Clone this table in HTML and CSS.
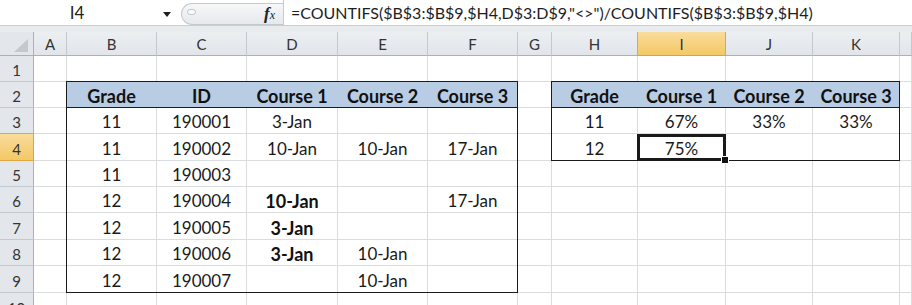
FILE: index.html
```html
<!DOCTYPE html>
<html>
<head>
<meta charset="utf-8">
<title>Sheet</title>
<link rel="stylesheet" href="styles.css">
</head>
<body>
<div class="app">
  <div class="fbar">
    <div class="namebox">I4</div>
    <div class="nb-arrow"><svg width="8" height="5" viewBox="0 0 8 5"><polygon points="0,0 8,0 4,5" fill="#1e1e1e"/></svg></div>
    <div class="tools">
      <div class="pill"><span class="knob"></span><span class="fx"><i class="f">f</i><i class="x">x</i></span></div>
    </div>
    <div class="formula">=COUNTIFS($B$3:$B$9,$H4,D$3:D$9,"&lt;&gt;")/COUNTIFS($B$3:$B$9,$H4)</div>
  </div>
  <div class="band"></div>
  <div class="stack">
  <div class="sheet">
    <div class="corner"><svg width="14" height="13" viewBox="0 0 14 13"><polygon points="0,13 14,13 14,0" fill="#c4c9cf"/></svg></div>
    <div class="h">A</div><div class="h">B</div><div class="h">C</div><div class="h">D</div><div class="h">E</div><div class="h">F</div><div class="h">G</div><div class="h">H</div><div class="h hs">I</div><div class="h">J</div><div class="h">K</div><div class="h"></div>

    <div class="rh">1</div>
    <div class="c"></div><div class="c"></div><div class="c"></div><div class="c"></div><div class="c"></div><div class="c"></div><div class="c"></div><div class="c"></div><div class="c"></div><div class="c"></div><div class="c"></div><div class="c"></div>

    <div class="rh">2</div>
    <div class="c"></div><div class="c th">Grade</div><div class="c th">ID</div><div class="c th">Course 1</div><div class="c th">Course 2</div><div class="c th">Course 3</div><div class="c"></div><div class="c th">Grade</div><div class="c th">Course 1</div><div class="c th">Course 2</div><div class="c th">Course 3</div><div class="c"></div>

    <div class="rh">3</div>
    <div class="c"></div><div class="c">11</div><div class="c">190001</div><div class="c">3-Jan</div><div class="c"></div><div class="c"></div><div class="c"></div><div class="c">11</div><div class="c">67%</div><div class="c">33%</div><div class="c">33%</div><div class="c"></div>

    <div class="rh rs">4</div>
    <div class="c"></div><div class="c">11</div><div class="c">190002</div><div class="c">10-Jan</div><div class="c">10-Jan</div><div class="c">17-Jan</div><div class="c"></div><div class="c">12</div><div class="c">75%</div><div class="c"></div><div class="c"></div><div class="c"></div>

    <div class="rh">5</div>
    <div class="c"></div><div class="c">11</div><div class="c">190003</div><div class="c"></div><div class="c"></div><div class="c"></div><div class="c"></div><div class="c"></div><div class="c"></div><div class="c"></div><div class="c"></div><div class="c"></div>

    <div class="rh">6</div>
    <div class="c"></div><div class="c">12</div><div class="c">190004</div><div class="c b">10-Jan</div><div class="c"></div><div class="c">17-Jan</div><div class="c"></div><div class="c"></div><div class="c"></div><div class="c"></div><div class="c"></div><div class="c"></div>

    <div class="rh">7</div>
    <div class="c"></div><div class="c">12</div><div class="c">190005</div><div class="c b">3-Jan</div><div class="c"></div><div class="c"></div><div class="c"></div><div class="c"></div><div class="c"></div><div class="c"></div><div class="c"></div><div class="c"></div>

    <div class="rh">8</div>
    <div class="c"></div><div class="c">12</div><div class="c">190006</div><div class="c b">3-Jan</div><div class="c">10-Jan</div><div class="c"></div><div class="c"></div><div class="c"></div><div class="c"></div><div class="c"></div><div class="c"></div><div class="c"></div>

    <div class="rh">9</div>
    <div class="c"></div><div class="c">12</div><div class="c">190007</div><div class="c"></div><div class="c">10-Jan</div><div class="c"></div><div class="c"></div><div class="c"></div><div class="c"></div><div class="c"></div><div class="c"></div><div class="c"></div>

    <div class="rh">10</div>
    <div class="c"></div><div class="c"></div><div class="c"></div><div class="c"></div><div class="c"></div><div class="c"></div><div class="c"></div><div class="c"></div><div class="c"></div><div class="c"></div><div class="c"></div><div class="c"></div>
  </div>
  <div class="sheet overlay">
    <div class="frame t1"></div>
    <div class="frame t1h"></div>
    <div class="frame t2"></div>
    <div class="frame t2h"></div>
    <div class="sel"><span class="handle"></span></div>
  </div>
  </div>
</div>
</body>
</html>
```

FILE: styles.css
```css
* { box-sizing: border-box; margin: 0; padding: 0; }
html, body { width: 912px; height: 305px; overflow: hidden; background: #fff; }
body { font-family: Lato, "Noto Sans", sans-serif; color: #1f1f1f; }

.app { display: flex; flex-direction: column; height: 305px; overflow: hidden; }

/* formula bar */
.fbar { display: flex; height: 26px; flex: none; border-bottom: 1px solid #c9cdd2; background: #fff; }
.namebox { width: 154px; display: flex; align-items: center; justify-content: center; font-size: 17px; color: #222; }
.nb-arrow { width: 27px; display: flex; align-items: center; padding-left: 9px; padding-top: 3px; }
.tools { width: 103px; border-right: 1px solid #c6cacf; display: flex; align-items: center; }
.pill { flex: 1; height: 22px; margin-top: 2px; display: flex; align-items: center; justify-content: space-between;
  border: 1px solid #c5cad0; border-right: none; border-radius: 11px 0 0 11px;
  background: linear-gradient(#f6f7f8, #e6e9ed); padding: 0 8px 0 5px; }
.knob { width: 9px; height: 6px; border-radius: 4px; border: 1px solid #c3c8ce; background: #f7f8f9; margin-top: -4px; }
.fx { font-family: "Liberation Serif", serif; color: #222; display: flex; align-items: baseline; }
.fx .f { font-size: 17px; font-weight: bold; }
.fx .x { font-size: 12px; }
.formula { flex: 1; display: flex; align-items: center; padding-left: 7px; font-size: 16px; color: #1e1e1e; white-space: nowrap; }

.band { height: 6px; flex: none; background: #e9ecef; }

/* sheet grid: cells layer and overlay layer share one area */
.stack { display: grid; flex: none; }
.stack > .sheet { grid-area: 1 / 1; }
.sheet { display: grid;
  grid-template-columns: 34px 33px 90px 90px 91px 90px 90px 34px 86px 88px 87px 87px 12px;
  grid-template-rows: 24px 26px 26px 26px 27px 26px 26px 27px 26px 27px 27px;
  font-size: 17px; }
.overlay { pointer-events: none; }

.corner { background: #e3e7ec; border-right: 1px solid #a9b2bc; border-bottom: 1px solid #a9b2bc;
  display: flex; align-items: flex-end; justify-content: flex-end; padding: 0 5px 3px 0; }
.h { background: linear-gradient(#eceff2, #e1e5ea); border-right: 1px solid #c3c9d0; border-bottom: 1px solid #a9b2bc;
  display: flex; align-items: center; justify-content: center; font-size: 15px; color: #333; }
.rh { background: #e3e7ec; border-right: 1px solid #a9b2bc; border-bottom: 1px solid #c3c9d0;
  display: flex; align-items: center; justify-content: center; font-size: 15px; color: #333; padding-top: 3px; }
.hs { background: linear-gradient(#f9dc9c, #f3c866); border-right-color: #e2a742; border-bottom-color: #ee9a36; box-shadow: -1px 0 0 #e2a742; }
.rs { background: linear-gradient(#f9dc9c, #f3c866); border-right-color: #ee9a36; border-bottom-color: #e2a742; box-shadow: 0 -1px 0 #e2a742; }

.c { background: #fff; border-right: 1px solid #dadcdd; border-bottom: 1px solid #dadcdd;
  display: flex; align-items: flex-end; justify-content: center; line-height: 22px; white-space: nowrap; color: #1a1a1a; }
.th { background: #b8cce4; border-right-color: #b8cce4; font-weight: bold; font-size: 18px; color: #111; }
.b { font-weight: bold; font-size: 18px; color: #111; }

.frame { border: 1px solid #1b1b1b; margin: -1px 0 0 -1px; }
.t1 { grid-column: 3 / 8; grid-row: 3 / 11; }
.t1h { grid-column: 3 / 8; grid-row: 3 / 4; }
.t2 { grid-column: 9 / 13; grid-row: 3 / 6; }
.t2h { grid-column: 9 / 13; grid-row: 3 / 4; }

.sel { grid-column: 10 / 11; grid-row: 5 / 6; margin-left: -1px; border: 3px solid #1a1a1a; position: relative; }
.handle { position: absolute; right: -5px; bottom: -5px; width: 6px; height: 6px; background: #111; outline: 1px solid #fff; }
```
